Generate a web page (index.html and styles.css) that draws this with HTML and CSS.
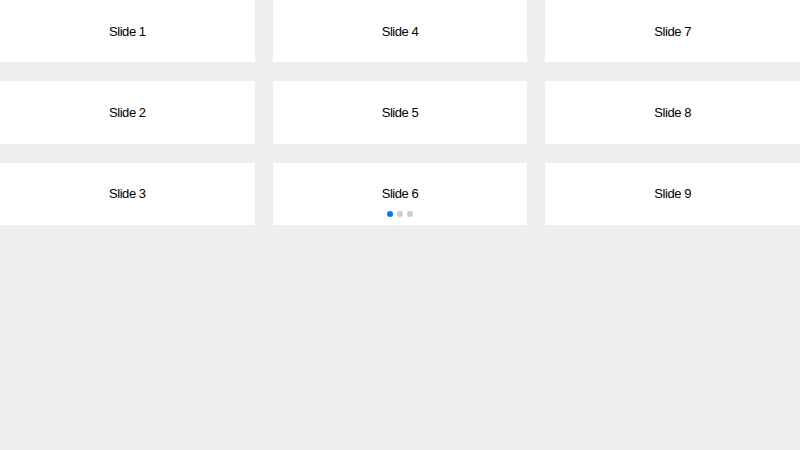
FILE: index.html
```html
<!DOCTYPE html>
<html>
<head>
<meta charset="utf-8">
<link rel="stylesheet" href="styles.css">
</head>
<body>
<div class="swiper">
  <div class="grid">
    <div class="slide">Slide 1</div>
    <div class="slide">Slide 4</div>
    <div class="slide">Slide 7</div>
    <div class="slide">Slide 2</div>
    <div class="slide">Slide 5</div>
    <div class="slide">Slide 8</div>
    <div class="slide">Slide 3</div>
    <div class="slide">Slide 6</div>
    <div class="slide">Slide 9</div>
  </div>
  <div class="pagination">
    <span class="dot active"></span>
    <span class="dot"></span>
    <span class="dot"></span>
  </div>
</div>
</body>
</html>
```
FILE: styles.css
```css
html, body {
  margin: 0;
  padding: 0;
  background: #eeeeee;
  font-family: "Liberation Sans", Arial, sans-serif;
  color: #000;
}
.swiper {
  position: relative;
  width: 800px;
  height: 225px;
}
.grid {
  display: grid;
  grid-template-columns: repeat(3, 1fr);
  grid-template-rows: repeat(3, 62.33px);
  column-gap: 18px;
  row-gap: 19px;
  height: 225px;
}
.slide {
  background: #fff;
  display: flex;
  align-items: center;
  justify-content: center;
  font-size: 13px;
  letter-spacing: -0.45px;
}
.pagination {
  position: absolute;
  left: 0;
  right: 0;
  bottom: 8px;
  display: flex;
  justify-content: center;
  gap: 4px;
}
.dot {
  width: 6px;
  height: 6px;
  border-radius: 50%;
  background: #cccccc;
}
.dot.active {
  background: #007aff;
}
```
